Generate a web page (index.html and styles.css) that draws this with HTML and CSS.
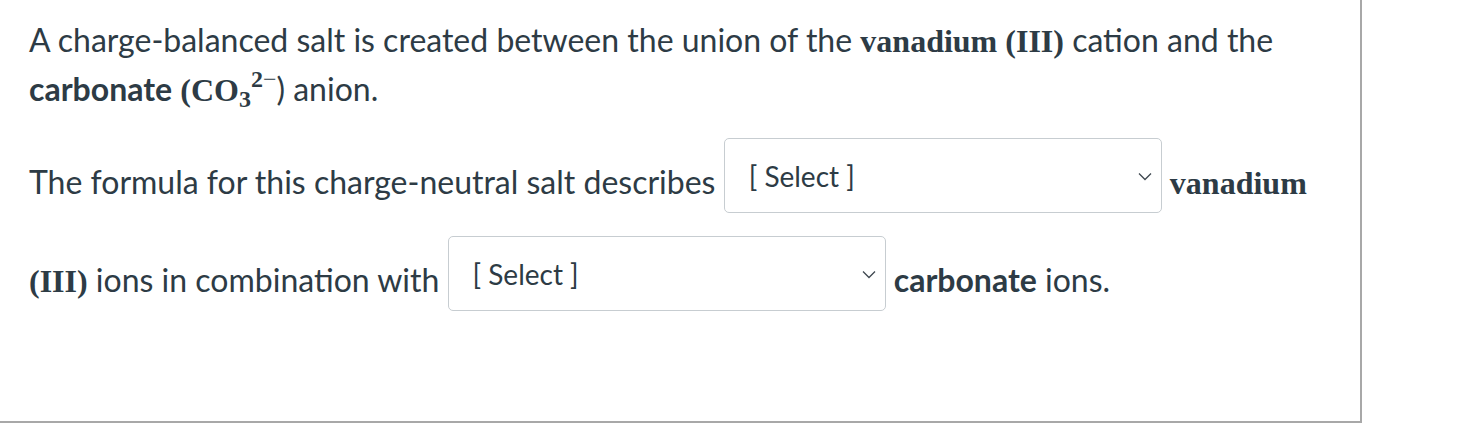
FILE: index.html
```html
<!DOCTYPE html>
<html lang="en">
<head>
<meta charset="utf-8">
<title>Question</title>
<link rel="stylesheet" href="styles.css">
</head>
<body>
<div class="card">
  <p class="para">A charge-balanced salt is created between the union of the <b class="serif">vanadium (III)</b> cation and the <b class="sans-bold">carbonate</b> <b class="serif">(CO<sub class="sub">3</sub><sup class="sup">2<span class="minus">−</span></sup></b>) anion.</p>
  <p class="para last">The formula for this charge-neutral salt describes <span class="select"><span class="select-inner"><span class="select-text">[ Select ]</span><svg class="chev" width="14" height="9" viewBox="0 0 14 9"><path d="M1 1.5 L7 7.5 L13 1.5" fill="none" stroke="#3f4850" stroke-width="1.3"/></svg></span></span> <b class="serif">vanadium (III)</b> ions in combination with <span class="select"><span class="select-inner"><span class="select-text">[ Select ]</span><svg class="chev" width="14" height="9" viewBox="0 0 14 9"><path d="M1 1.5 L7 7.5 L13 1.5" fill="none" stroke="#3f4850" stroke-width="1.3"/></svg></span></span> <b class="sans-bold">carbonate</b> ions.</p>
</div>
</body>
</html>
```
FILE: styles.css
```css
html, body {
  margin: 0;
  padding: 0;
  background: #ffffff;
}

.card {
  box-sizing: border-box;
  width: 1362px;
  height: 423px;
  padding: 16px 30px 0 29px;
  border-right: 2px solid #a8a8a8;
  border-bottom: 2px solid #a8a8a8;
  font-family: Lato, "Noto Sans", sans-serif;
  font-size: 32px;
  line-height: 48px;
  color: #2d3b45;
}

.para {
  margin: 0 0 13px 0;
}

.para.last {
  margin-bottom: 0;
}

.serif {
  font-family: "Liberation Serif", "Times New Roman", serif;
  font-weight: bold;
}

.sans-bold {
  font-weight: bold;
}

.sub,
.sup {
  font-size: 0.75em;
  line-height: 0;
}

.sub {
  vertical-align: -0.26em;
}

.sup {
  vertical-align: 0.6em;
}

.minus {
  font-weight: normal;
}

.select {
  box-sizing: border-box;
  display: inline-block;
  width: 438px;
  height: 75px;
  margin: 11px 0 12px 0;
  border: 1px solid #c7cdd1;
  border-radius: 5px;
  overflow: hidden;
  vertical-align: -31px;
  background: #ffffff;
}

.select-inner {
  box-sizing: border-box;
  display: flex;
  align-items: center;
  justify-content: space-between;
  height: 100%;
  padding: 0 9px 0 24px;
}

.select-text {
  display: inline-block;
  font-size: 28px;
  line-height: 36px;
  white-space: nowrap;
  color: #2d3b45;
}

.chev {
  display: block;
  flex: none;
  margin-top: 1px;
}
```
